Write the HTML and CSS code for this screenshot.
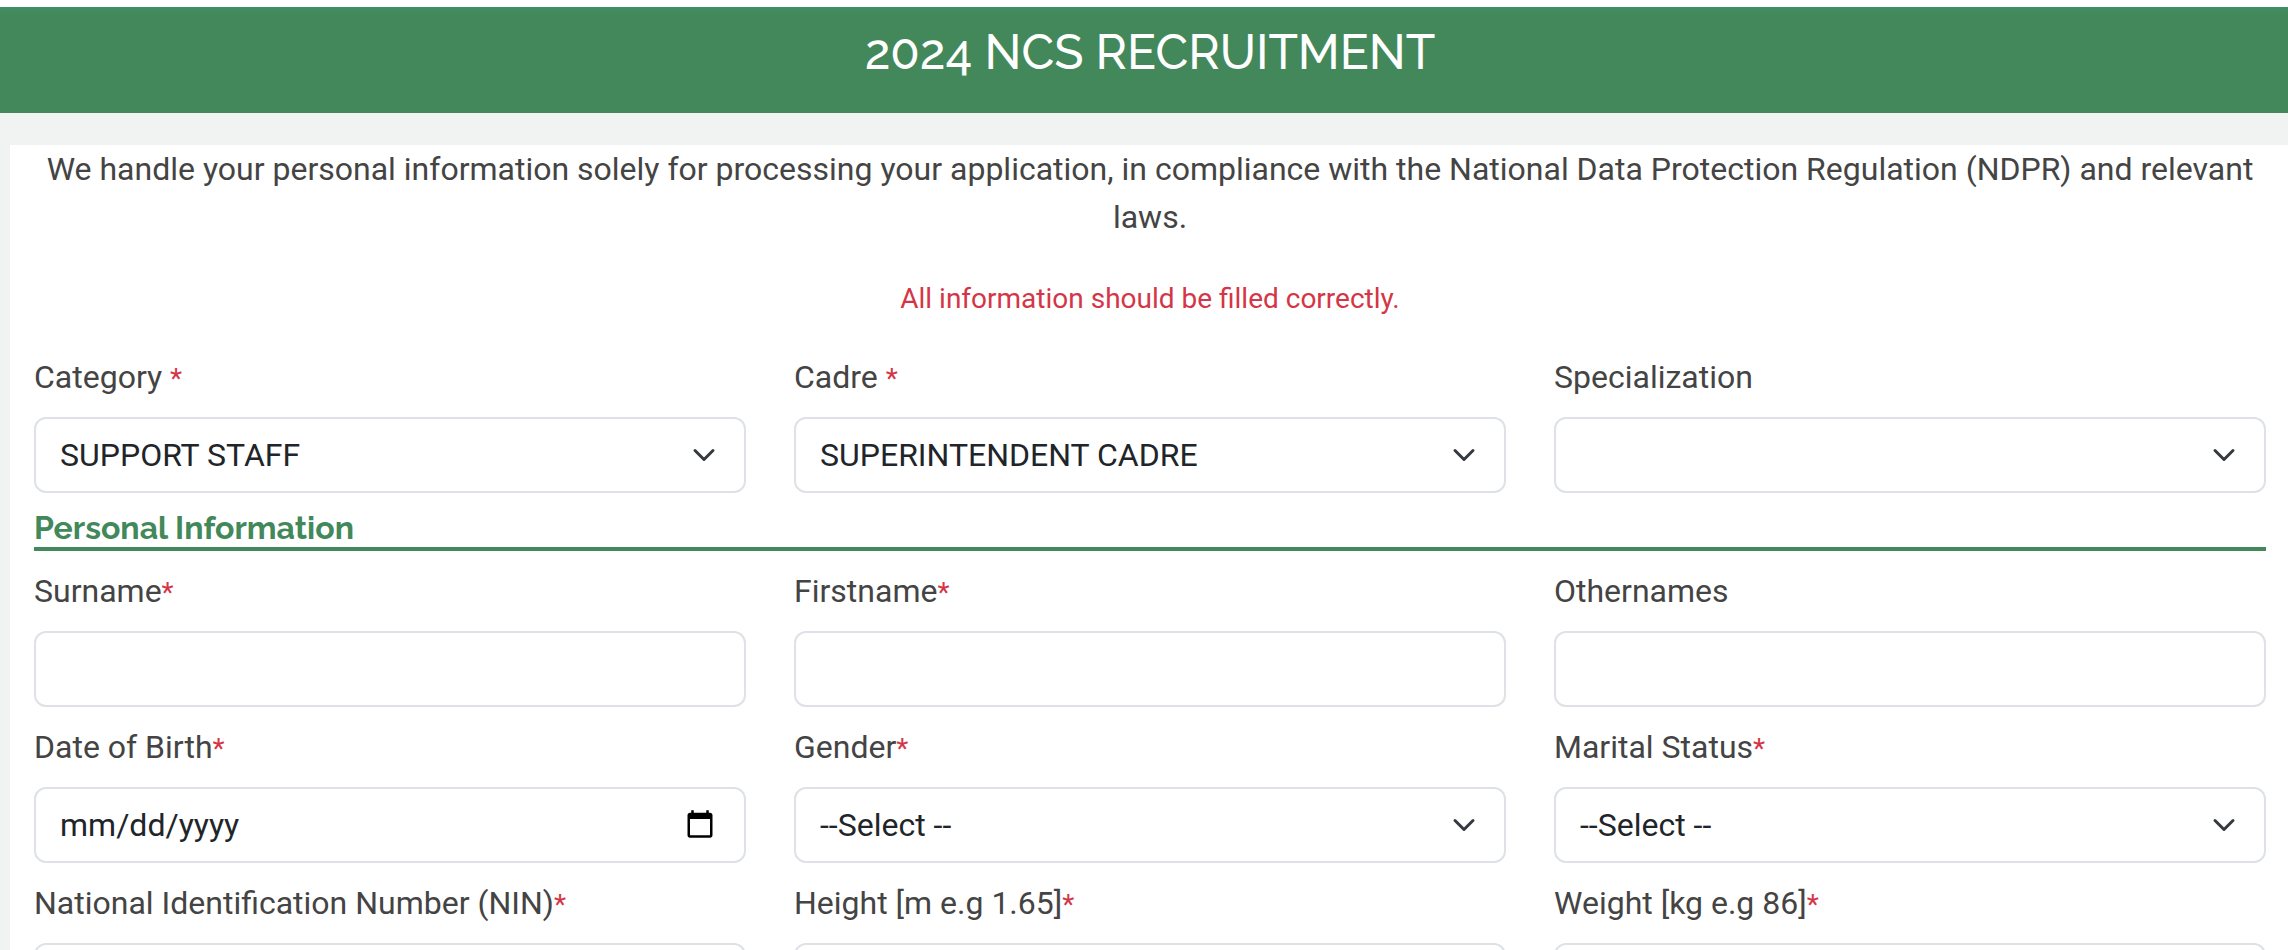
FILE: index.html
```
<!DOCTYPE html>
<html lang="en">
<head>
  <meta charset="UTF-8">
  <title>2024 NCS Recruitment</title>
  <meta name="viewport" content="width=device-width, initial-scale=1.0">
  <link rel="stylesheet" href="styles.css">
</head>
<body>
  <header class="page-header">
    <h1 class="page-title">2024 NCS RECRUITMENT</h1>
  </header>

  <main class="content">
    <form class="card">
      <p class="notice">We handle your personal information solely for processing your application, in compliance with the National Data Protection Regulation (NDPR) and relevant laws.</p>
      <p class="notice"><small class="text-danger">All information should be filled correctly.</small></p>

      <div class="row">
        <div class="form-group">
          <label for="category">Category <small class="text-danger">*</small></label>
          <select id="category" class="form-control form-select">
            <option>SUPPORT STAFF</option>
          </select>
        </div>
        <div class="form-group">
          <label for="cadre">Cadre <small class="text-danger">*</small></label>
          <select id="cadre" class="form-control form-select">
            <option>SUPERINTENDENT CADRE</option>
          </select>
        </div>
        <div class="form-group">
          <label for="specialization">Specialization</label>
          <select id="specialization" class="form-control form-select">
            <option></option>
          </select>
        </div>
      </div>

      <h2 class="section-title">Personal Information</h2>

      <div class="row">
        <div class="form-group">
          <label for="surname">Surname<small class="text-danger">*</small></label>
          <input type="text" id="surname" class="form-control">
        </div>
        <div class="form-group">
          <label for="firstname">Firstname<small class="text-danger">*</small></label>
          <input type="text" id="firstname" class="form-control">
        </div>
        <div class="form-group">
          <label for="othernames">Othernames</label>
          <input type="text" id="othernames" class="form-control">
        </div>
        <div class="form-group">
          <label for="dob">Date of Birth<small class="text-danger">*</small></label>
          <input type="date" id="dob" class="form-control">
        </div>
        <div class="form-group">
          <label for="gender">Gender<small class="text-danger">*</small></label>
          <select id="gender" class="form-control form-select">
            <option>--Select --</option>
          </select>
        </div>
        <div class="form-group">
          <label for="marital-status">Marital Status<small class="text-danger">*</small></label>
          <select id="marital-status" class="form-control form-select">
            <option>--Select --</option>
          </select>
        </div>
        <div class="form-group">
          <label for="nin">National Identification Number (NIN)<small class="text-danger">*</small></label>
          <input type="text" id="nin" class="form-control">
        </div>
        <div class="form-group">
          <label for="height">Height [m e.g 1.65]<small class="text-danger">*</small></label>
          <input type="text" id="height" class="form-control">
        </div>
        <div class="form-group">
          <label for="weight">Weight [kg e.g 86]<small class="text-danger">*</small></label>
          <input type="text" id="weight" class="form-control">
        </div>
      </div>
    </form>
  </main>
</body>
</html>
```

FILE: styles.css
```
* {
  box-sizing: border-box;
}
body {
  margin: 0;
  font-family: Roboto, sans-serif;
  font-size: 32px;
  line-height: 48px;
  color: #444;
  background: #f1f3f2;
}
.page-header {
  padding: 16px 0 32px 12px;
  border-top: 7px solid #fff;
  background: linear-gradient(#3f9066, #43885a 8px) padding-box;
  color: #fff;
  text-align: center;
}
.page-title {
  margin: 0;
  font-family: Raleway, Lato, sans-serif;
  font-size: 48px;
  font-weight: 500;
  line-height: 58px;
}
.content {
  padding: 32px 0 0 10px;
}
.card {
  padding: 0 22px 32px 24px;
  background: #fff;
}
.notice {
  margin: 0 0 32px;
  text-align: center;
}
small {
  font-size: 28px;
  line-height: 1;
}
.text-danger {
  color: #d43647;
}
.row {
  display: grid;
  grid-template-columns: repeat(3, 1fr);
  gap: 16px 48px;
}
.form-group {
  display: flex;
  flex-direction: column;
  gap: 16px;
}
.form-control {
  width: 100%;
  height: 76px;
  padding: 12px 24px;
  border: 2px solid #dee2e6;
  border-radius: 12px;
  background-color: #fff;
  color: #212529;
  font-family: inherit;
  font-size: 32px;
  line-height: 48px;
  appearance: none;
}
.form-control:focus {
  outline: none;
  border-color: #43885a;
}
.form-control::-webkit-datetime-edit,
.form-control::-webkit-datetime-edit-fields-wrapper,
.form-control::-webkit-datetime-edit-month-field,
.form-control::-webkit-datetime-edit-day-field,
.form-control::-webkit-datetime-edit-year-field {
  padding: 0;
}
.form-control::-webkit-calendar-picker-indicator {
  margin-right: 2px;
}
.form-select {
  padding: 12px 72px 12px 24px;
  background-image: url("data:image/svg+xml,%3Csvg xmlns='http://www.w3.org/2000/svg' viewBox='0 0 16 16'%3E%3Cpath fill='none' stroke='%23343a40' stroke-linecap='round' stroke-linejoin='round' stroke-width='2' d='m2 5 6 6 6-6'/%3E%3C/svg%3E");
  background-repeat: no-repeat;
  background-position: right 24px center;
  background-size: 32px 24px;
}
.section-title {
  margin: 16px 0;
  border-bottom: 4px solid #43885a;
  color: #43885a;
  font-family: Raleway, Lato, sans-serif;
  font-size: 32px;
  font-weight: 700;
  line-height: 38px;
}
```
